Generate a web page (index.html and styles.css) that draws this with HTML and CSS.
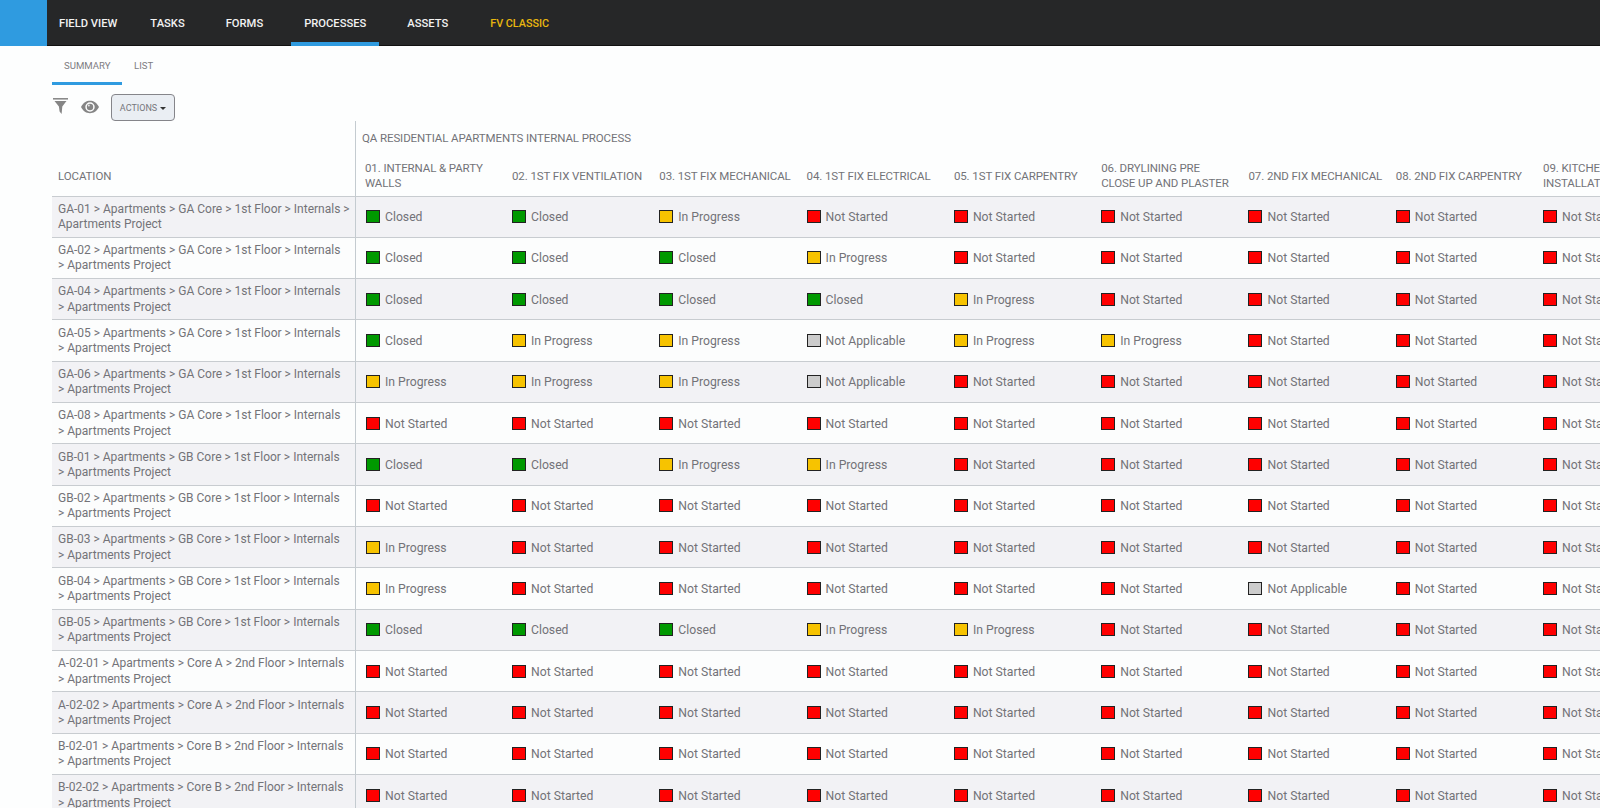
FILE: index.html
```html
<!DOCTYPE html>
<html lang="en">
<head>
<meta charset="utf-8">
<title>Processes</title>
<link rel="stylesheet" href="styles.css">
</head>
<body>
<nav class="topbar">
  <div class="logo"></div>
  <a class="nav-item nav-field">FIELD VIEW</a>
  <a class="nav-item nav-tasks">TASKS</a>
  <a class="nav-item nav-forms">FORMS</a>
  <a class="nav-item nav-processes active">PROCESSES</a>
  <a class="nav-item nav-assets">ASSETS</a>
  <a class="nav-item nav-classic">FV CLASSIC</a>
</nav>
<main class="content">
  <div class="tabs">
    <a class="tab tab-on">SUMMARY</a>
    <a class="tab">LIST</a>
  </div>
  <div class="tools">
    <svg class="ico-filter" viewBox="0 0 15 16" width="15" height="16"><path d="M0 0h15v1.6H0z" fill="#8a8a8a"/><path d="M1.5 3h12L9.3 8.6 8.6 16 6.6 13.6 5.9 8.6z" fill="#858585"/></svg>
    <svg class="ico-eye" viewBox="0 0 18 14" width="18" height="14"><path fill-rule="evenodd" d="M0 7C2.3 2.6 5.4.8 9 .8s6.700 1.800 9 6.200c-2.300 4.400-5.400 6.200-9 6.200S2.300 11.400 0 7zm9-4.700a4.700 4.700 0 1 0 0 9.400 4.700 4.700 0 0 0 0-9.400z" fill="#858585"/><circle cx="9" cy="7" r="3.200" fill="#858585"/><circle cx="7.800" cy="5.600" r="1" fill="#e4e4e4"/></svg>
    <button class="actions" type="button">ACTIONS<span class="caret"></span></button>
  </div>
  <table class="grid">
    <colgroup><col class="c-loc"><col class="c-1"><col class="c-n"><col class="c-n"><col class="c-n"><col class="c-n"><col class="c-n"><col class="c-n"><col class="c-n"><col class="c-n"></colgroup>
    <thead>
      <tr class="h-group"><th></th><th class="group" colspan="9">QA RESIDENTIAL APARTMENTS INTERNAL PROCESS</th></tr>
      <tr class="h-cols">
        <th class="loc-h">LOCATION</th>
        <th>01. INTERNAL &amp; PARTY<br>WALLS</th>
        <th>02. 1ST FIX VENTILATION</th>
        <th>03. 1ST FIX MECHANICAL</th>
        <th>04. 1ST FIX ELECTRICAL</th>
        <th>05. 1ST FIX CARPENTRY</th>
        <th>06. DRYLINING PRE<br>CLOSE UP AND PLASTER</th>
        <th>07. 2ND FIX MECHANICAL</th>
        <th>08. 2ND FIX CARPENTRY</th>
        <th>09. KITCHEN<br>INSTALLATION</th>
      </tr>
    </thead>
    <tbody>
      <tr><th>GA-01 &gt; Apartments &gt; GA Core &gt; 1st Floor &gt; Internals &gt;<br>Apartments Project</th><td><i class="s g"></i>Closed</td><td><i class="s g"></i>Closed</td><td><i class="s y"></i>In Progress</td><td><i class="s r"></i>Not Started</td><td><i class="s r"></i>Not Started</td><td><i class="s r"></i>Not Started</td><td><i class="s r"></i>Not Started</td><td><i class="s r"></i>Not Started</td><td><i class="s r"></i>Not Started</td></tr>
      <tr><th>GA-02 &gt; Apartments &gt; GA Core &gt; 1st Floor &gt; Internals<br>&gt; Apartments Project</th><td><i class="s g"></i>Closed</td><td><i class="s g"></i>Closed</td><td><i class="s g"></i>Closed</td><td><i class="s y"></i>In Progress</td><td><i class="s r"></i>Not Started</td><td><i class="s r"></i>Not Started</td><td><i class="s r"></i>Not Started</td><td><i class="s r"></i>Not Started</td><td><i class="s r"></i>Not Started</td></tr>
      <tr><th>GA-04 &gt; Apartments &gt; GA Core &gt; 1st Floor &gt; Internals<br>&gt; Apartments Project</th><td><i class="s g"></i>Closed</td><td><i class="s g"></i>Closed</td><td><i class="s g"></i>Closed</td><td><i class="s g"></i>Closed</td><td><i class="s y"></i>In Progress</td><td><i class="s r"></i>Not Started</td><td><i class="s r"></i>Not Started</td><td><i class="s r"></i>Not Started</td><td><i class="s r"></i>Not Started</td></tr>
      <tr><th>GA-05 &gt; Apartments &gt; GA Core &gt; 1st Floor &gt; Internals<br>&gt; Apartments Project</th><td><i class="s g"></i>Closed</td><td><i class="s y"></i>In Progress</td><td><i class="s y"></i>In Progress</td><td><i class="s a"></i>Not Applicable</td><td><i class="s y"></i>In Progress</td><td><i class="s y"></i>In Progress</td><td><i class="s r"></i>Not Started</td><td><i class="s r"></i>Not Started</td><td><i class="s r"></i>Not Started</td></tr>
      <tr><th>GA-06 &gt; Apartments &gt; GA Core &gt; 1st Floor &gt; Internals<br>&gt; Apartments Project</th><td><i class="s y"></i>In Progress</td><td><i class="s y"></i>In Progress</td><td><i class="s y"></i>In Progress</td><td><i class="s a"></i>Not Applicable</td><td><i class="s r"></i>Not Started</td><td><i class="s r"></i>Not Started</td><td><i class="s r"></i>Not Started</td><td><i class="s r"></i>Not Started</td><td><i class="s r"></i>Not Started</td></tr>
      <tr><th>GA-08 &gt; Apartments &gt; GA Core &gt; 1st Floor &gt; Internals<br>&gt; Apartments Project</th><td><i class="s r"></i>Not Started</td><td><i class="s r"></i>Not Started</td><td><i class="s r"></i>Not Started</td><td><i class="s r"></i>Not Started</td><td><i class="s r"></i>Not Started</td><td><i class="s r"></i>Not Started</td><td><i class="s r"></i>Not Started</td><td><i class="s r"></i>Not Started</td><td><i class="s r"></i>Not Started</td></tr>
      <tr><th>GB-01 &gt; Apartments &gt; GB Core &gt; 1st Floor &gt; Internals<br>&gt; Apartments Project</th><td><i class="s g"></i>Closed</td><td><i class="s g"></i>Closed</td><td><i class="s y"></i>In Progress</td><td><i class="s y"></i>In Progress</td><td><i class="s r"></i>Not Started</td><td><i class="s r"></i>Not Started</td><td><i class="s r"></i>Not Started</td><td><i class="s r"></i>Not Started</td><td><i class="s r"></i>Not Started</td></tr>
      <tr><th>GB-02 &gt; Apartments &gt; GB Core &gt; 1st Floor &gt; Internals<br>&gt; Apartments Project</th><td><i class="s r"></i>Not Started</td><td><i class="s r"></i>Not Started</td><td><i class="s r"></i>Not Started</td><td><i class="s r"></i>Not Started</td><td><i class="s r"></i>Not Started</td><td><i class="s r"></i>Not Started</td><td><i class="s r"></i>Not Started</td><td><i class="s r"></i>Not Started</td><td><i class="s r"></i>Not Started</td></tr>
      <tr><th>GB-03 &gt; Apartments &gt; GB Core &gt; 1st Floor &gt; Internals<br>&gt; Apartments Project</th><td><i class="s y"></i>In Progress</td><td><i class="s r"></i>Not Started</td><td><i class="s r"></i>Not Started</td><td><i class="s r"></i>Not Started</td><td><i class="s r"></i>Not Started</td><td><i class="s r"></i>Not Started</td><td><i class="s r"></i>Not Started</td><td><i class="s r"></i>Not Started</td><td><i class="s r"></i>Not Started</td></tr>
      <tr><th>GB-04 &gt; Apartments &gt; GB Core &gt; 1st Floor &gt; Internals<br>&gt; Apartments Project</th><td><i class="s y"></i>In Progress</td><td><i class="s r"></i>Not Started</td><td><i class="s r"></i>Not Started</td><td><i class="s r"></i>Not Started</td><td><i class="s r"></i>Not Started</td><td><i class="s r"></i>Not Started</td><td><i class="s a"></i>Not Applicable</td><td><i class="s r"></i>Not Started</td><td><i class="s r"></i>Not Started</td></tr>
      <tr><th>GB-05 &gt; Apartments &gt; GB Core &gt; 1st Floor &gt; Internals<br>&gt; Apartments Project</th><td><i class="s g"></i>Closed</td><td><i class="s g"></i>Closed</td><td><i class="s g"></i>Closed</td><td><i class="s y"></i>In Progress</td><td><i class="s y"></i>In Progress</td><td><i class="s r"></i>Not Started</td><td><i class="s r"></i>Not Started</td><td><i class="s r"></i>Not Started</td><td><i class="s r"></i>Not Started</td></tr>
      <tr><th>A-02-01 &gt; Apartments &gt; Core A &gt; 2nd Floor &gt; Internals<br>&gt; Apartments Project</th><td><i class="s r"></i>Not Started</td><td><i class="s r"></i>Not Started</td><td><i class="s r"></i>Not Started</td><td><i class="s r"></i>Not Started</td><td><i class="s r"></i>Not Started</td><td><i class="s r"></i>Not Started</td><td><i class="s r"></i>Not Started</td><td><i class="s r"></i>Not Started</td><td><i class="s r"></i>Not Started</td></tr>
      <tr><th>A-02-02 &gt; Apartments &gt; Core A &gt; 2nd Floor &gt; Internals<br>&gt; Apartments Project</th><td><i class="s r"></i>Not Started</td><td><i class="s r"></i>Not Started</td><td><i class="s r"></i>Not Started</td><td><i class="s r"></i>Not Started</td><td><i class="s r"></i>Not Started</td><td><i class="s r"></i>Not Started</td><td><i class="s r"></i>Not Started</td><td><i class="s r"></i>Not Started</td><td><i class="s r"></i>Not Started</td></tr>
      <tr><th>B-02-01 &gt; Apartments &gt; Core B &gt; 2nd Floor &gt; Internals<br>&gt; Apartments Project</th><td><i class="s r"></i>Not Started</td><td><i class="s r"></i>Not Started</td><td><i class="s r"></i>Not Started</td><td><i class="s r"></i>Not Started</td><td><i class="s r"></i>Not Started</td><td><i class="s r"></i>Not Started</td><td><i class="s r"></i>Not Started</td><td><i class="s r"></i>Not Started</td><td><i class="s r"></i>Not Started</td></tr>
      <tr><th>B-02-02 &gt; Apartments &gt; Core B &gt; 2nd Floor &gt; Internals<br>&gt; Apartments Project</th><td><i class="s r"></i>Not Started</td><td><i class="s r"></i>Not Started</td><td><i class="s r"></i>Not Started</td><td><i class="s r"></i>Not Started</td><td><i class="s r"></i>Not Started</td><td><i class="s r"></i>Not Started</td><td><i class="s r"></i>Not Started</td><td><i class="s r"></i>Not Started</td><td><i class="s r"></i>Not Started</td></tr>
    </tbody>
  </table>
</main>
</body>
</html>
```
FILE: styles.css
```css
* { box-sizing: border-box; }
html, body { height: 100%; }
body {
  margin: 0;
  height: 808px;
  overflow: hidden;
  background: #fdfefe;
  font-family: "Roboto", "Lato", sans-serif;
  color: #6e6e72;
}
.topbar {
  display: flex;
  height: 46px;
  background: #262728;
  border-bottom: 1px solid #111;
  align-items: stretch;
}
.logo { width: 47px; background: #2f9be0; margin-bottom: -1px; }
.nav-item {
  display: flex;
  align-items: center;
  padding: 0 13px;
  margin-bottom: -1px;
  color: #f2f2f2;
  font-size: 11.200px;
  font-weight: 500;
  white-space: nowrap;
}
.nav-field { margin-left: -1px; margin-right: 7px; }
.nav-tasks { margin-right: 15px; }
.nav-forms { margin-right: 15px; }
.nav-processes { border-bottom: 4px solid #2f9be0; padding-top: 4px; margin-right: 15px; }
.nav-assets { margin-right: 16px; }
.nav-classic { color: #e9b70f; font-size: 10.800px; }
.content { padding-left: 52px; width: 1700px; }
.tabs { display: flex; height: 40px; }
.tab {
  padding: 14px 12px 0;
  font-size: 9.600px;
  color: #7d7d82;
  height: 39px;
}
.tab-on { width: 70px; border-bottom: 3px solid #2f9be0; }
.tools {
  display: flex;
  align-items: center;
  height: 35px;
  padding: 8px 0 0 1px;
}
.ico-filter { margin: -4px 13px 0 0; }
.ico-eye { margin: -2px 12px 0 0; }
.actions {
  width: 64px;
  height: 27px;
  padding: 0;
  border: 1px solid #85858a;
  border-radius: 4px;
  background: #eaeef3;
  color: #77777c;
  font: 400 9px "Roboto", sans-serif;
}
.caret {
  display: inline-block;
  margin-left: 3px;
  vertical-align: middle;
  border-top: 3px solid #333;
  border-left: 3px solid transparent;
  border-right: 3px solid transparent;
}
.grid {
  table-layout: fixed;
  border-collapse: separate;
  border-spacing: 0;
  width: 1623px;
}
.c-loc { width: 304px; }
.c-1 { width: 147px; }
.c-n { width: 147.300px; }
.grid th, .grid td {
  font-size: 12.200px;
  font-weight: 400;
  text-align: left;
  color: #737378;
  line-height: 15.500px;
  padding: 0;
}
.h-group { height: 36px; }
.h-group th:first-child { border-right: 1px solid #c4cbd0; }
.grid .group { padding-left: 6px; letter-spacing: -.1px; font-size: 11.500px; }
.h-cols { height: 39.500px; }
.grid .h-cols th {
  padding: 0 0 0 9px;
  letter-spacing: -.1px;
  font-size: 11.500px;
  white-space: nowrap;
  vertical-align: middle;
  border-bottom: 1px solid #c8ccd0;
}
.grid .h-cols .loc-h { padding-left: 6px; border-right: 1px solid #c4cbd0; }
tbody tr { height: 41.330px; }
tbody tr:nth-child(odd) th, tbody tr:nth-child(odd) td { background: #f2f2f5; }
tbody tr:nth-child(even) th, tbody tr:nth-child(even) td { background: #fcfdfd; }
.grid tbody th {
  padding: 1px 0 0 6px;
  font-size: 12px;
  border-right: 1px solid #c4cbd0;
  border-bottom: 1px solid #c8ccd0;
  white-space: nowrap;
}
.grid tbody td {
  padding: 2px 0 0 9px;
  border-bottom: 1px solid #c8ccd0;
  white-space: nowrap;
}
.grid tbody th + td { padding-left: 10px; }
.s {
  display: inline-block;
  width: 14px;
  height: 13px;
  margin-right: 5px;
  border: 1px solid #222;
  vertical-align: -2px;
}
.g { background: #009900; }
.r { background: #ff0000; }
.y { background: #f7c300; }
.a { background: #cccccc; }
```
